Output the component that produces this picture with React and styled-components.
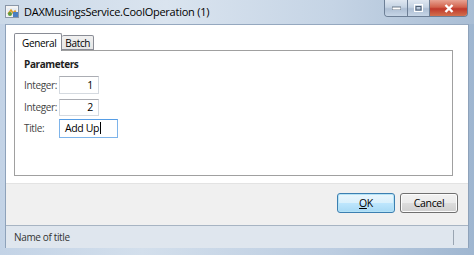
import React from "react";
import styled, { createGlobalStyle } from "styled-components";

const Global = createGlobalStyle`
  html, body { margin: 0; padding: 0; background: #fff; }
  body { font-family: "Open Sans", "Noto Sans", sans-serif; }
`;

const Window = styled.div`
  width: 474px;
  height: 255px;
  display: flex;
  flex-direction: column;
  background: linear-gradient(90deg, #c3d3e6 0%, #d3dfec 30%, #bccde1 70%, #9fb6d0 100%);
  overflow: hidden;
  font-size: 10px;
  letter-spacing: -0.35px;
  color: #1e1e1e;
`;

const TitleBar = styled.div`
  height: 24px;
  flex: none;
  display: flex;
  align-items: center;
  padding-left: 5px;
  position: relative;
  background: linear-gradient(90deg, #cbd9e8 0%, #dae4ef 35%, #c5d4e5 70%, #a9bdd4 100%);
`;

const TitleText = styled.span`
  margin-left: 4px;
  font-size: 11px;
  color: #000;
  letter-spacing: -0.25px;
  margin-top: -2px;
`;

const Caption = styled.div`
  position: absolute;
  right: 6px;
  top: 0;
  display: flex;
  height: 16px;
  border: 1px solid #6d7f96;
  border-top: none;
  border-radius: 0 0 4px 4px;
  overflow: hidden;
`;

const CapBtn = styled.div`
  width: ${p => p.$w}px;
  display: flex;
  align-items: center;
  justify-content: center;
  border-left: ${p => (p.$first ? "none" : "1px solid #6d7f96")};
  background: ${p =>
    p.$close
      ? "linear-gradient(180deg, #e8a393 0%, #d2624c 45%, #c0392b 55%, #d2704d 100%)"
      : "linear-gradient(180deg, #dfe7f1 0%, #c5d3e3 45%, #aebfd4 55%, #c6d5e6 100%)"};
`;

const Body = styled.div`
  flex: 1;
  display: flex;
  padding: 0 5px 7px 5px;
  min-height: 0;
`;

const Client = styled.div`
  flex: 1;
  display: flex;
  flex-direction: column;
  border: 1px solid #8ea2ba;
  border-top-color: #95a8bf;
  background: #fff;
`;

const Main = styled.div`
  height: 158px;
  flex: none;
  background: #fff;
  padding: 8px 15px 0 8px;
  box-sizing: border-box;
  display: flex;
  flex-direction: column;
`;

const Tabs = styled.div`
  display: flex;
  align-items: flex-end;
  height: 17px;
  position: relative;
  z-index: 1;
`;

const Tab = styled.div`
  height: ${p => (p.$active ? 18 : 15)}px;
  box-sizing: border-box;
  padding: 0 ${p => (p.$active ? 5 : 3)}px 0 ${p => (p.$active ? 7 : 3)}px;
  display: flex;
  align-items: center;
  border: 1px solid #898c95;
  border-bottom: ${p => (p.$active ? "none" : "1px solid #898c95")};
  border-left: ${p => (p.$first ? "1px solid #898c95" : "none")};
  margin-bottom: ${p => (p.$active ? -1 : 0)}px;
  border-radius: 2px 2px 0 0;
  background: ${p =>
    p.$active ? "#fff" : "linear-gradient(180deg, #f0f0f0 0%, #e6e6e6 100%)"};
  color: #000;
`;

const Panel = styled.div`
  height: 126px;
  box-sizing: border-box;
  border: 1px solid #a0a0a0;
  padding: 6px 9px;
  display: flex;
  flex-direction: column;
`;

const GroupTitle = styled.div`
  font-weight: 700;
  color: #1e1e1e;
  margin-bottom: 3px;
  letter-spacing: -0.4px;
`;

const Row = styled.div`
  display: flex;
  align-items: center;
  height: 18px;
  margin-top: ${p => p.$mt || 0}px;
`;

const Label = styled.div`
  width: 35px;
  color: #444;
`;

const Field = styled.div`
  width: ${p => p.$w}px;
  height: ${p => p.$h || 18}px;
  box-sizing: border-box;
  border: 1px solid ${p => (p.$focus ? "#7eb4ea" : "#d5dae0")};
  border-top-color: ${p => (p.$focus ? "#569de5" : "#abadb3")};
  display: flex;
  align-items: center;
  justify-content: ${p => (p.$right ? "flex-end" : "flex-start")};
  padding: 0 5px;
  font-size: 10.5px;
  color: #000;
`;

const Caret = styled.span`
  display: inline-block;
  width: 1px;
  height: 12px;
  background: #000;
  margin-left: 1px;
`;

const Footer = styled.div`
  height: 42px;
  flex: none;
  background: #f0f0f0;
  border-top: 1px solid #e3e3e3;
  box-sizing: border-box;
  display: flex;
  justify-content: flex-end;
  align-items: flex-start;
  padding: 9px 10px 0 0;
  gap: 5px;
`;

const Button = styled.div`
  width: 58px;
  height: 20px;
  box-sizing: border-box;
  border: 1px solid ${p => (p.$default ? "#3c7fb1" : "#707070")};
  border-radius: 3px;
  box-shadow: inset 0 0 0 1px ${p => (p.$default ? "#b5e3f6" : "#fcfcfc")};
  background: ${p =>
    p.$default
      ? "linear-gradient(180deg, #eaf6fd 0%, #d9f0fc 50%, #bee6fd 51%, #a7d9f5 100%)"
      : "linear-gradient(180deg, #f2f2f2 0%, #ebebeb 50%, #dddddd 51%, #cfcfcf 100%)"};
  display: flex;
  align-items: center;
  justify-content: center;
  font-size: 10.5px;
  color: #000;
`;

const U = styled.span`
  text-decoration: underline;
`;

const StatusBar = styled.div`
  height: 22px;
  flex: none;
  background: #dfe6ee;
  border-top: 1px solid #a7b4c3;
  display: flex;
  align-items: center;
  padding-left: 8px;
  position: relative;
  color: #333;
`;

const Grip = styled.div`
  position: absolute;
  right: 14px;
  top: 4px;
  width: 1px;
  height: 15px;
  background: #9aa5b2;
`;

function AppIcon() {
  return (
    <svg width="15" height="14" viewBox="0 0 15 14">
      <rect x="0.5" y="0.5" width="13" height="12" fill="#f4f4f4" stroke="#8a97a8" />
      <rect x="2" y="3" width="10" height="8" fill="#e8eef5" />
      <path d="M3 9 L6 5 L8 8 L10 6 L12 10" stroke="#d89b2b" strokeWidth="1.5" fill="none" />
      <circle cx="5" cy="9" r="2" fill="#5a9a3a" />
      <rect x="8" y="7" width="5" height="5" fill="#4a7fc1" />
    </svg>
  );
}

export default function App() {
  return (
    <>
      <Global />
      <Window>
        <TitleBar>
          <AppIcon />
          <TitleText>DAXMusingsService.CoolOperation (1)</TitleText>
          <Caption>
            <CapBtn $w={22} $first>
              <svg width="9" height="4"><rect x="0" y="1" width="9" height="3" fill="#fff" stroke="#4d5d70" strokeWidth="0.8" /></svg>
            </CapBtn>
            <CapBtn $w={21}>
              <svg width="9" height="8"><rect x="0.5" y="0.5" width="8" height="7" fill="none" stroke="#fff" strokeWidth="1" /><rect x="2" y="2.5" width="5" height="3.5" fill="none" stroke="#4d5d70" strokeWidth="1" /></svg>
            </CapBtn>
            <CapBtn $w={37} $close>
              <svg width="10" height="9" viewBox="0 0 10 9"><path d="M1.5 1 L8.5 8 M8.5 1 L1.5 8" stroke="#fff" strokeWidth="2.4" /></svg>
            </CapBtn>
          </Caption>
        </TitleBar>
        <Body>
          <Client>
            <Main>
              <Tabs>
                <Tab $active $first>General</Tab>
                <Tab>Batch</Tab>
              </Tabs>
              <Panel>
                <GroupTitle>Parameters</GroupTitle>
                <Row $mt={2}>
                  <Label>Integer:</Label>
                  <Field $w={40} $right>1</Field>
                </Row>
                <Row $mt={4}>
                  <Label>Integer:</Label>
                  <Field $w={40} $h={17} $right>2</Field>
                </Row>
                <Row $mt={3}>
                  <Label>Title:</Label>
                  <Field $w={59} $h={19} $focus>Add Up<Caret /></Field>
                </Row>
              </Panel>
            </Main>
            <Footer>
              <Button $default><U>O</U>K</Button>
              <Button>Cancel</Button>
            </Footer>
            <StatusBar>
              Name of title
              <Grip />
            </StatusBar>
          </Client>
        </Body>
      </Window>
    </>
  );
}
